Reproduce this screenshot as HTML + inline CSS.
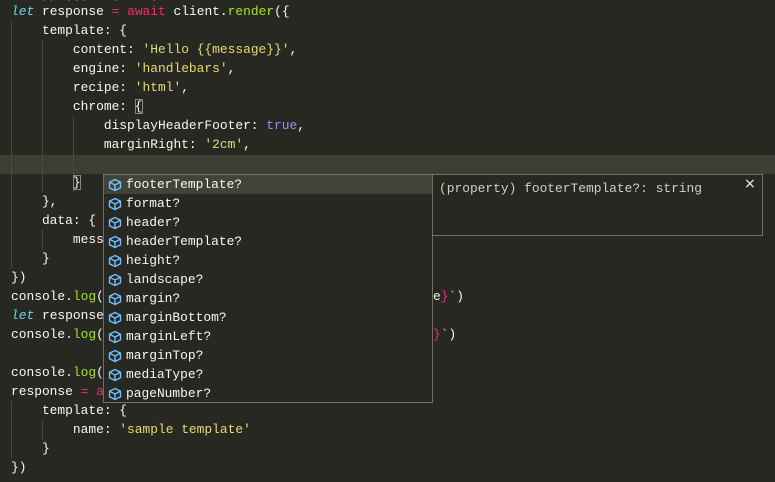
<!DOCTYPE html>
<html><head><style>
html,body{margin:0;padding:0;width:775px;height:482px;overflow:hidden;background:#272822;}
body{font-family:"Liberation Mono",monospace;font-size:12.9px;color:#f8f8f2;position:relative;}
.l{position:absolute;left:11px;height:19px;line-height:19px;white-space:pre;}
.k{color:#66d9ef;font-style:italic}.o{color:#f92672}.f{color:#a6e22e}.s{color:#e6db74}.n{color:#ae81ff}
.g{position:absolute;width:1px;background:#4a4a43;}
.cur{position:absolute;left:0;top:155px;width:775px;height:19px;background:#3e3d32;}
#sug{position:absolute;left:103px;top:174px;width:328px;height:227px;border:1px solid #75715e;background:#272822;}
.it{height:19px;line-height:19px;position:relative;padding-left:22px;white-space:pre;color:#f8f8f2}
.it.sel{background:#414339;}
.it svg{position:absolute;left:4px;top:3px}
#det{position:absolute;left:433px;top:174px;width:329px;height:60px;border:1px solid #75715e;border-left:none;background:#272822;color:#cfcfc2}
</style></head><body>
<div class="cur"></div>
<div class="g" style="left:11px;top:21px;height:247px"></div>
<div class="g" style="left:42px;top:40px;height:152px"></div>
<div class="g" style="left:73px;top:116px;height:76px"></div>
<div class="g" style="left:42px;top:230px;height:19px"></div>
<div class="g" style="left:11px;top:401px;height:57px"></div>
<div class="g" style="left:42px;top:420px;height:19px"></div>
<div class="l" style="top:-12px;color:#75715e">    // ...   .    .</div>
<div class="l" style="top:2px"><span class="k">let</span> response <span class="o">=</span> <span class="o">await</span> client.<span class="f">render</span>({</div>
<div class="l" style="top:21px">    template: {</div>
<div class="l" style="top:40px">        content: <span class="s">'Hello {{message}}'</span>,</div>
<div class="l" style="top:59px">        engine: <span class="s">'handlebars'</span>,</div>
<div class="l" style="top:78px">        recipe: <span class="s">'html'</span>,</div>
<div class="l" style="top:97px">        chrome: <span style="outline:1px solid #888;outline-offset:-1px">{</span></div>
<div class="l" style="top:116px">            displayHeaderFooter: <span class="n">true</span>,</div>
<div class="l" style="top:135px">            marginRight: <span class="s">'2cm'</span>,</div>
<div class="l" style="top:173px">        <span style="outline:1px solid #888;outline-offset:-1px">}</span></div>
<div class="l" style="top:192px">    },</div>
<div class="l" style="top:211px">    data: {</div>
<div class="l" style="top:230px">        message</div>
<div class="l" style="top:249px">    }</div>
<div class="l" style="top:268px">})</div>
<div class="l" style="top:287px">console.<span class="f">log</span>(</div>
<div class="l" style="top:287px;left:433px">e<span class="o">}</span><span class="s">`</span>)</div>
<div class="l" style="top:306px"><span class="k">let</span> response</div>
<div class="l" style="top:325px">console.<span class="f">log</span>(</div>
<div class="l" style="top:325px;left:433px"><span class="o">}</span><span class="s">`</span>)</div>
<div class="l" style="top:363px">console.<span class="f">log</span>(</div>
<div class="l" style="top:382px">response <span class="o">=</span> <span class="o">await</span></div>
<div class="l" style="top:401px">    template: {</div>
<div class="l" style="top:420px">        name: <span class="s">'sample template'</span></div>
<div class="l" style="top:439px">    }</div>
<div class="l" style="top:458px">})</div>
<div id="sug">
<div class="it sel"><svg width="14" height="14" viewBox="0 0 14 14"><path d="M7 1.5L12.5 4.2V9.8L7 12.5L1.5 9.8V4.2Z M1.5 4.2L7 7L12.5 4.2 M7 7V12.5" fill="none" stroke="#75beff" stroke-width="1.4"/></svg>footerTemplate?</div>
<div class="it"><svg width="14" height="14" viewBox="0 0 14 14"><path d="M7 1.5L12.5 4.2V9.8L7 12.5L1.5 9.8V4.2Z M1.5 4.2L7 7L12.5 4.2 M7 7V12.5" fill="none" stroke="#75beff" stroke-width="1.4"/></svg>format?</div>
<div class="it"><svg width="14" height="14" viewBox="0 0 14 14"><path d="M7 1.5L12.5 4.2V9.8L7 12.5L1.5 9.8V4.2Z M1.5 4.2L7 7L12.5 4.2 M7 7V12.5" fill="none" stroke="#75beff" stroke-width="1.4"/></svg>header?</div>
<div class="it"><svg width="14" height="14" viewBox="0 0 14 14"><path d="M7 1.5L12.5 4.2V9.8L7 12.5L1.5 9.8V4.2Z M1.5 4.2L7 7L12.5 4.2 M7 7V12.5" fill="none" stroke="#75beff" stroke-width="1.4"/></svg>headerTemplate?</div>
<div class="it"><svg width="14" height="14" viewBox="0 0 14 14"><path d="M7 1.5L12.5 4.2V9.8L7 12.5L1.5 9.8V4.2Z M1.5 4.2L7 7L12.5 4.2 M7 7V12.5" fill="none" stroke="#75beff" stroke-width="1.4"/></svg>height?</div>
<div class="it"><svg width="14" height="14" viewBox="0 0 14 14"><path d="M7 1.5L12.5 4.2V9.8L7 12.5L1.5 9.8V4.2Z M1.5 4.2L7 7L12.5 4.2 M7 7V12.5" fill="none" stroke="#75beff" stroke-width="1.4"/></svg>landscape?</div>
<div class="it"><svg width="14" height="14" viewBox="0 0 14 14"><path d="M7 1.5L12.5 4.2V9.8L7 12.5L1.5 9.8V4.2Z M1.5 4.2L7 7L12.5 4.2 M7 7V12.5" fill="none" stroke="#75beff" stroke-width="1.4"/></svg>margin?</div>
<div class="it"><svg width="14" height="14" viewBox="0 0 14 14"><path d="M7 1.5L12.5 4.2V9.8L7 12.5L1.5 9.8V4.2Z M1.5 4.2L7 7L12.5 4.2 M7 7V12.5" fill="none" stroke="#75beff" stroke-width="1.4"/></svg>marginBottom?</div>
<div class="it"><svg width="14" height="14" viewBox="0 0 14 14"><path d="M7 1.5L12.5 4.2V9.8L7 12.5L1.5 9.8V4.2Z M1.5 4.2L7 7L12.5 4.2 M7 7V12.5" fill="none" stroke="#75beff" stroke-width="1.4"/></svg>marginLeft?</div>
<div class="it"><svg width="14" height="14" viewBox="0 0 14 14"><path d="M7 1.5L12.5 4.2V9.8L7 12.5L1.5 9.8V4.2Z M1.5 4.2L7 7L12.5 4.2 M7 7V12.5" fill="none" stroke="#75beff" stroke-width="1.4"/></svg>marginTop?</div>
<div class="it"><svg width="14" height="14" viewBox="0 0 14 14"><path d="M7 1.5L12.5 4.2V9.8L7 12.5L1.5 9.8V4.2Z M1.5 4.2L7 7L12.5 4.2 M7 7V12.5" fill="none" stroke="#75beff" stroke-width="1.4"/></svg>mediaType?</div>
<div class="it"><svg width="14" height="14" viewBox="0 0 14 14"><path d="M7 1.5L12.5 4.2V9.8L7 12.5L1.5 9.8V4.2Z M1.5 4.2L7 7L12.5 4.2 M7 7V12.5" fill="none" stroke="#75beff" stroke-width="1.4"/></svg>pageNumber?</div>
</div>
<div id="det"><div style="position:absolute;left:6px;top:4px;line-height:19px;white-space:pre">(property) footerTemplate?: string</div>
<div style="position:absolute;left:311px;top:1px;font-family:'DejaVu Sans',sans-serif;font-size:14px;color:#f8f8f2">×</div></div>
</body></html>
